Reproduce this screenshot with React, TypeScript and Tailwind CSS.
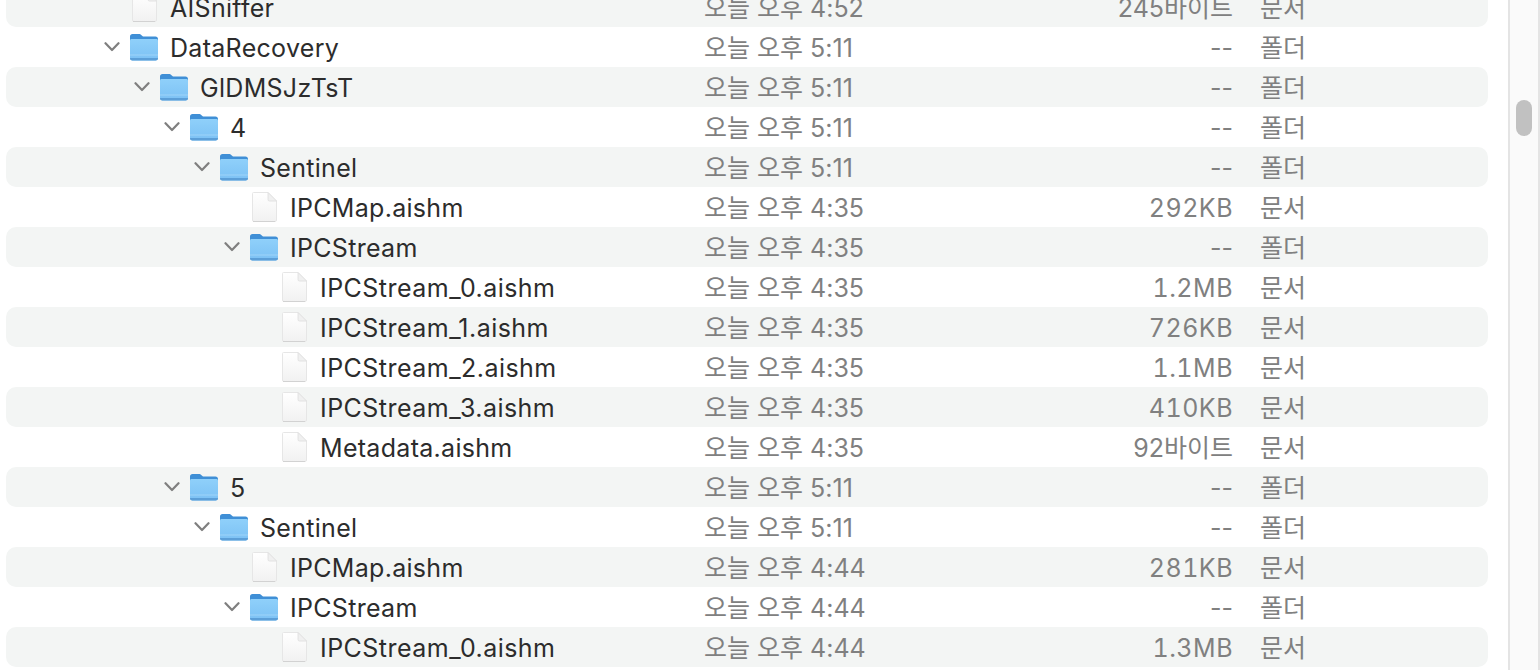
type Row = {
  name: string;
  depth: number;
  folder?: boolean;
  date: string;
  size: string;
  kind: string;
};

const rows: Row[] = [
  { name: "AISniffer", depth: 0, date: "오늘 오후 4:52", size: "245바이트", kind: "문서" },
  { name: "DataRecovery", depth: 0, folder: true, date: "오늘 오후 5:11", size: "--", kind: "폴더" },
  { name: "GlDMSJzTsT", depth: 1, folder: true, date: "오늘 오후 5:11", size: "--", kind: "폴더" },
  { name: "4", depth: 2, folder: true, date: "오늘 오후 5:11", size: "--", kind: "폴더" },
  { name: "Sentinel", depth: 3, folder: true, date: "오늘 오후 5:11", size: "--", kind: "폴더" },
  { name: "IPCMap.aishm", depth: 4, date: "오늘 오후 4:35", size: "292KB", kind: "문서" },
  { name: "IPCStream", depth: 4, folder: true, date: "오늘 오후 4:35", size: "--", kind: "폴더" },
  { name: "IPCStream_0.aishm", depth: 5, date: "오늘 오후 4:35", size: "1.2MB", kind: "문서" },
  { name: "IPCStream_1.aishm", depth: 5, date: "오늘 오후 4:35", size: "726KB", kind: "문서" },
  { name: "IPCStream_2.aishm", depth: 5, date: "오늘 오후 4:35", size: "1.1MB", kind: "문서" },
  { name: "IPCStream_3.aishm", depth: 5, date: "오늘 오후 4:35", size: "410KB", kind: "문서" },
  { name: "Metadata.aishm", depth: 5, date: "오늘 오후 4:35", size: "92바이트", kind: "문서" },
  { name: "5", depth: 2, folder: true, date: "오늘 오후 5:11", size: "--", kind: "폴더" },
  { name: "Sentinel", depth: 3, folder: true, date: "오늘 오후 5:11", size: "--", kind: "폴더" },
  { name: "IPCMap.aishm", depth: 4, date: "오늘 오후 4:44", size: "281KB", kind: "문서" },
  { name: "IPCStream", depth: 4, folder: true, date: "오늘 오후 4:44", size: "--", kind: "폴더" },
  { name: "IPCStream_0.aishm", depth: 5, date: "오늘 오후 4:44", size: "1.3MB", kind: "문서" },
];

const Chevron = () => (
  <svg width="16" height="10" viewBox="0 0 16 10" fill="none" className="shrink-0">
    <path d="M1.5 1.2 8 8 14.5 1.2" stroke="#7f7f7f" strokeWidth="2.2" strokeLinecap="round" strokeLinejoin="round" />
  </svg>
);

const FolderIcon = ({ id }: { id: number }) => (
  <svg width="28" height="28" viewBox="0 0 28 28" className="shrink-0">
    <defs>
      <linearGradient id={`folder-${id}`} x1="0" y1="0" x2="0" y2="1">
        <stop offset="0" stopColor="#8fd0fa" />
        <stop offset="1" stopColor="#7cc1f4" />
      </linearGradient>
    </defs>
    <path d="M0 3.5C0 2 1 1 2.5 1H9c1 0 1.5.3 2.2 1L13 3.6h12.5C27 3.6 28 4.6 28 6v4H0z" fill="#3f8fd6" />
    <path d="M0 7.5C0 6.6.6 6 1.5 6h25c.9 0 1.5.6 1.5 1.5V25c0 1.4-1 2.4-2.4 2.4H2.4C1 27.4 0 26.4 0 25z" fill={`url(#folder-${id})`} />
    <rect x="0" y="21.5" width="28" height="1" fill="#9dd4fa" />
    <path d="M0 25.4c0 1.2 1 2 2.4 2h23.2c1.4 0 2.4-.8 2.4-2v-.4H0z" fill="#5c9fd8" />
  </svg>
);

const FileIcon = ({ id }: { id: number }) => (
  <svg width="26" height="30" viewBox="0 0 26 30" className="shrink-0">
    <defs>
      <linearGradient id={`file-${id}`} x1="0" y1="0" x2="0" y2="1">
        <stop offset="0" stopColor="#ffffff" />
        <stop offset="1" stopColor="#f1f1f1" />
      </linearGradient>
    </defs>
    <path d="M1.5 1.5A1 1 0 0 1 2.5.5H17L25.5 9v19a1.5 1.5 0 0 1-1.5 1.5H3A1.5 1.5 0 0 1 1.5 28z" fill={`url(#file-${id})`} stroke="#e6e6e6" strokeWidth="1" />
    <path d="M17 .5V7.5a1.5 1.5 0 0 0 1.5 1.5H25.5z" fill="#f0f0f0" stroke="#dddddd" strokeWidth="0.8" />
    <path d="M2 29.5h22" stroke="#d2d2d2" strokeWidth="1" />
  </svg>
);

const App = () => {
  return (
    <div className="flex h-[670px] w-[1540px] overflow-hidden bg-white font-['Inter','Noto_Sans_CJK_KR',sans-serif] text-[25px]">
      <div className="w-[1508px] shrink-0 pl-[6px] pr-[20px] -mt-[13px]">
        {rows.map((row, index) => (
          <div key={index} className={`flex h-10 items-center rounded-[10px] ${index % 2 === 0 ? "bg-[#f3f5f4]" : "bg-white"}`}>
            <div className="flex w-[698px] shrink-0 items-center" style={{ paddingLeft: 98 + row.depth * 30 }}>
              <div className="flex w-4 shrink-0 justify-center">{row.folder && <Chevron />}</div>
              <div className="ml-[10px] flex w-[28px] shrink-0 justify-center">{row.folder ? <FolderIcon id={index} /> : <FileIcon id={index} />}</div>
              <span className={`ml-3 whitespace-nowrap pt-1 text-[#2c2c2c] ${row.name.includes("_") ? "tracking-[0.47px]" : "tracking-[0.3px]"}`}>{row.name}</span>
            </div>
            <div className="w-[300px] shrink-0 whitespace-nowrap pt-1 text-[#808080]">{row.date}</div>
            <div className={`w-[229px] shrink-0 whitespace-nowrap pt-1 text-right text-[#808080] ${row.size.endsWith("B") ? "tabular-nums tracking-[0.5px]" : ""}`}>{row.size}</div>
            <div className="ml-[27px] whitespace-nowrap pt-1 text-[#808080]">{row.kind}</div>
          </div>
        ))}
      </div>
      <div className="h-full w-[32px] shrink-0 border-x-2 border-x-[#e4e4e4] bg-[#fafafa] pt-[100px]">
        <div className="mx-auto h-9 w-4 rounded-full bg-[#c1c1c1]" />
      </div>
    </div>
  );
};

export default App;
